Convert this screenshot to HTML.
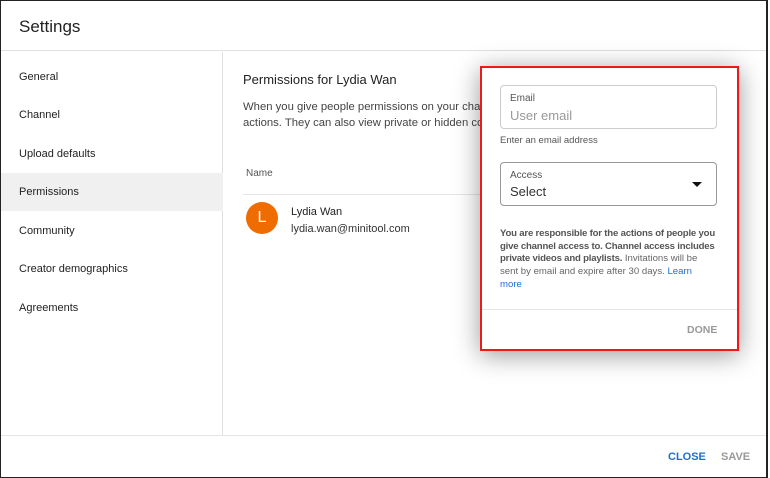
<!DOCTYPE html>
<html><head><style>
*{margin:0;padding:0;box-sizing:border-box}
body{width:770px;height:478px;overflow:hidden;background:#fff;font-family:"Liberation Sans",Arial,sans-serif;color:#0d0d0d;position:relative}
.frame{position:absolute;left:0;top:0;width:768px;height:478px;border:1px solid #222;border-right:2px solid #222}
.hdr{position:absolute;left:1px;top:1px;width:765px;height:50px;border-bottom:1px solid #e0e0e0}
.hdr span{position:absolute;left:18px;top:16px;font-size:17px;color:#222}
.side{position:absolute;left:1px;top:52px;width:222px;height:383px;border-right:1px solid #e0e0e0}
.nav{position:absolute;left:0;width:222px;height:38px;font-size:11px;color:#222;padding-left:18px;line-height:38px}
.nav.sel{background:#f0f0f0}
.main{position:absolute;left:243px}
.foot{position:absolute;left:1px;top:435px;width:765px;border-top:1px solid #e5e5e5;height:42px}
.btn{position:absolute;top:15px;font-size:11px;font-weight:bold}
.dlg{position:absolute;left:480px;top:66px;width:259px;height:285px;border:2px solid #f01818;background:#fff;box-shadow:0 4px 24px rgba(0,0,0,.4)}
.fld{position:absolute;left:18px;width:217px;border:1px solid #ccc;border-radius:4px}
</style></head><body>
<div class="frame"></div>
<div class="hdr"><span>Settings</span></div>
<div class="side">
<div class="nav" style="top:6px">General</div>
<div class="nav" style="top:44px">Channel</div>
<div class="nav" style="top:83px">Upload defaults</div>
<div class="nav sel" style="top:121px">Permissions</div>
<div class="nav" style="top:160px">Community</div>
<div class="nav" style="top:198px">Creator demographics</div>
<div class="nav" style="top:237px">Agreements</div>
</div>
<div class="main" style="top:72px;font-size:13px;color:#222">Permissions for Lydia Wan</div>
<div class="main" style="top:99px;font-size:11.3px;color:#444;line-height:16px;width:237px;white-space:nowrap;overflow:hidden">When you give people permissions on your channel<br>actions. They can also view private or hidden content</div>
<div class="main" style="top:168px;left:246px;font-size:10px;color:#555">Name</div>
<div class="main" style="top:194px;width:240px;border-top:1px solid #e5e5e5"></div>
<div class="main" style="top:202px;left:246px;width:32px;height:32px;border-radius:50%;background:#ef6c00;color:#fff;font-size:16px;text-align:center;line-height:32px">L</div>
<div class="main" style="top:206px;left:291px;font-size:11px;color:#222">Lydia Wan</div>
<div class="main" style="top:223px;left:291px;font-size:11px;color:#333">lydia.wan@minitool.com</div>
<div class="foot"><span class="btn" style="left:667px;color:#1a6fd6">CLOSE</span><span class="btn" style="left:720px;color:#999">SAVE</span></div>
<div class="dlg">
<div class="fld" style="top:17px;height:44px"><div style="position:absolute;left:9px;top:7px;font-size:10px;color:#555">Email</div><div style="position:absolute;left:9px;top:22px;font-size:13px;color:#999">User email</div></div>
<div style="position:absolute;left:18px;top:67px;font-size:9.5px;color:#555">Enter an email address</div>
<div class="fld" style="top:94px;height:44px;border-color:#999"><div style="position:absolute;left:9px;top:7px;font-size:10px;color:#555">Access</div><div style="position:absolute;left:9px;top:21px;font-size:13px;color:#333">Select</div><div style="position:absolute;left:191px;top:19px;width:0;height:0;border-left:5px solid transparent;border-right:5px solid transparent;border-top:5px solid #111"></div></div>
<div style="position:absolute;left:18px;top:160px;font-size:9.6px;line-height:12.7px;color:#666;white-space:nowrap"><b style="color:#555;letter-spacing:-0.2px">You are responsible for the actions of people you<br>give channel access to. Channel access includes<br>private videos and playlists.</b> Invitations will be<br>sent by email and expire after 30 days. <span style="color:#1a6fd6">Learn</span><br><span style="color:#1a6fd6">more</span></div>
<div style="position:absolute;left:0;top:241px;width:255px;border-top:1px solid #e5e5e5"></div>
<div style="position:absolute;left:205px;top:256px;font-size:10.5px;font-weight:bold;color:#999">DONE</div>
</div>
</body></html>
